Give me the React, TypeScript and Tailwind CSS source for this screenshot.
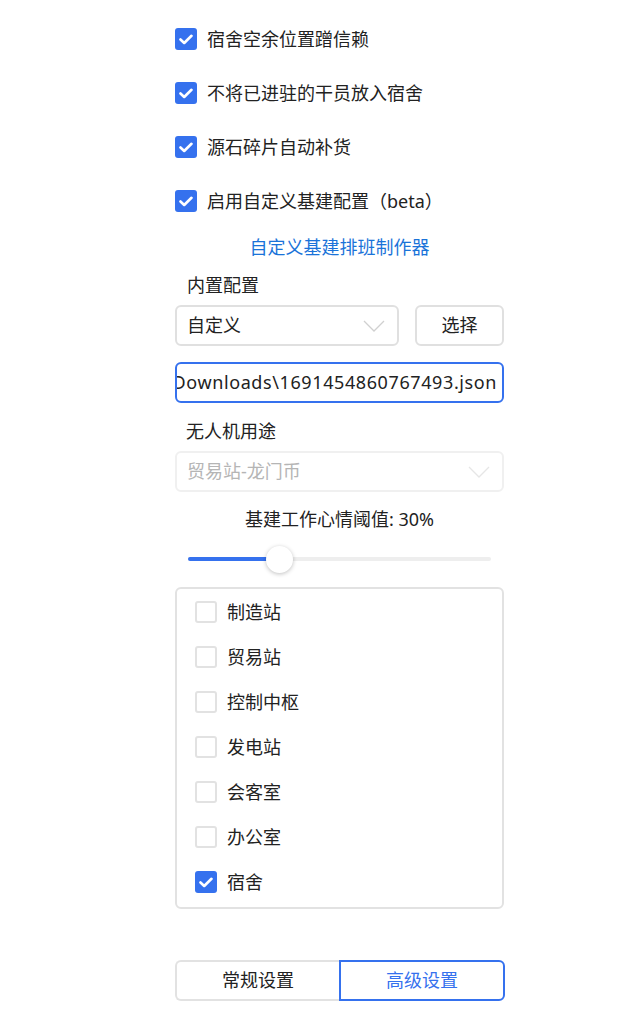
import { useState } from "react";

const FONT = { fontFamily: '"Noto Sans", "Noto Sans CJK SC", sans-serif' };

const Check = ({ checked }: { checked: boolean }) =>
  checked ? (
    <span className="flex h-[22px] w-[22px] shrink-0 items-center justify-center rounded-[3px] bg-[#3571ee]">
      <svg width="14" height="11" viewBox="0 0 14 11" fill="none">
        <path d="M1.5 5.5 L5.2 9 L12.5 1.8" stroke="white" strokeWidth="2.6" strokeLinecap="round" strokeLinejoin="round" />
      </svg>
    </span>
  ) : (
    <span className="h-[22px] w-[22px] shrink-0 rounded-[3px] border-2 border-[#e2e2e2] bg-white" />
  );

const Chevron = ({ color }: { color: string }) => (
  <svg width="22" height="12" viewBox="0 0 22 12" fill="none">
    <path d="M1 1 L11 11 L21 1" stroke={color} strokeWidth="1.3" />
  </svg>
);

const topOptions = [
  "宿舍空余位置蹭信赖",
  "不将已进驻的干员放入宿舍",
  "源石碎片自动补货",
  "启用自定义基建配置（beta）",
];

const facilities: [string, boolean][] = [
  ["制造站", false],
  ["贸易站", false],
  ["控制中枢", false],
  ["发电站", false],
  ["会客室", false],
  ["办公室", false],
  ["宿舍", true],
];

export default function App() {
  const [tab, setTab] = useState<"normal" | "advanced">("advanced");

  return (
    <div className="min-h-[1036px] w-[631px] bg-white text-[18px] text-[#222]" style={FONT}>
      <div className="ml-[175px] flex w-[329px] flex-col pt-[28px]">
        <div className="flex flex-col gap-[32px]">
          {topOptions.map((t) => (
            <label key={t} className="flex h-[22px] items-center gap-[10px]">
              <Check checked />
              <span className="leading-none">{t}</span>
            </label>
          ))}
        </div>

        <a className="mt-[23px] text-center leading-[24px] text-[#1a73d9]">自定义基建排班制作器</a>

        <div className="mt-[14px] pl-[12px] leading-[24px]">内置配置</div>

        <div className="mt-[8px] flex gap-[16px]">
          <div className="flex h-[41px] flex-1 items-center justify-between rounded-[6px] border-2 border-[#e0e0e0] pl-[10px] pr-[12px]">
            <span>自定义</span>
            <Chevron color="#d0d0d0" />
          </div>
          <button className="h-[41px] w-[89px] rounded-[6px] border-2 border-[#e0e0e0] bg-white">选择</button>
        </div>

        <div className="mt-[16px] flex h-[41px] items-center justify-end overflow-hidden whitespace-nowrap rounded-[6px] border-2 border-[#3571ee] pr-[5px] tracking-[0.6px]">
          <span>Downloads\1691454860767493.json</span>
        </div>

        <div className="mt-[16px] pl-[11px] leading-[24px]">无人机用途</div>

        <div className="mt-[8px] flex h-[41px] items-center justify-between rounded-[6px] border-2 border-[#f0f0f0] pl-[10px] pr-[12px] text-[#b5b5b5]">
          <span>贸易站-龙门币</span>
          <Chevron color="#e6e6e6" />
        </div>

        <div className="mt-[15px] text-center leading-[24px]">基建工作心情阈值: 30%</div>

        <div className="relative mx-[13px] mt-[13px] h-[30px]">
          <div className="absolute left-0 right-0 top-[13px] h-[4px] rounded-full bg-[#eeeeee]" />
          <div className="absolute left-0 top-[13px] h-[4px] w-[92px] rounded-l-full bg-[#3571ee]" />
          <div className="absolute left-[78px] top-[2px] h-[27px] w-[27px] rounded-full bg-white shadow-[0_1px_4px_rgba(0,0,0,0.25)]" />
        </div>

        <div className="mt-[13px] flex flex-col gap-[23px] rounded-[6px] border-2 border-[#e2e2e2] pb-[14px] pl-[18px] pt-[12px]">
          {facilities.map(([name, on]) => (
            <label key={name} className="flex h-[22px] items-center gap-[10px]">
              <Check checked={on} />
              <span className="leading-none">{name}</span>
            </label>
          ))}
        </div>

        <div className="mt-[51px] flex h-[41px] w-[330px]">
          <button
            onClick={() => setTab("normal")}
            className={`flex-1 rounded-l-[6px] border-2 ${tab === "normal" ? "border-[#3571ee] text-[#3571ee]" : "border-r-0 border-[#e2e2e2]"} bg-white`}
          >
            常规设置
          </button>
          <button
            onClick={() => setTab("advanced")}
            className={`flex-1 rounded-r-[6px] border-2 ${tab === "advanced" ? "border-[#3571ee] text-[#3571ee]" : "border-l-0 border-[#e2e2e2]"} bg-white`}
          >
            高级设置
          </button>
        </div>
      </div>
    </div>
  );
}
